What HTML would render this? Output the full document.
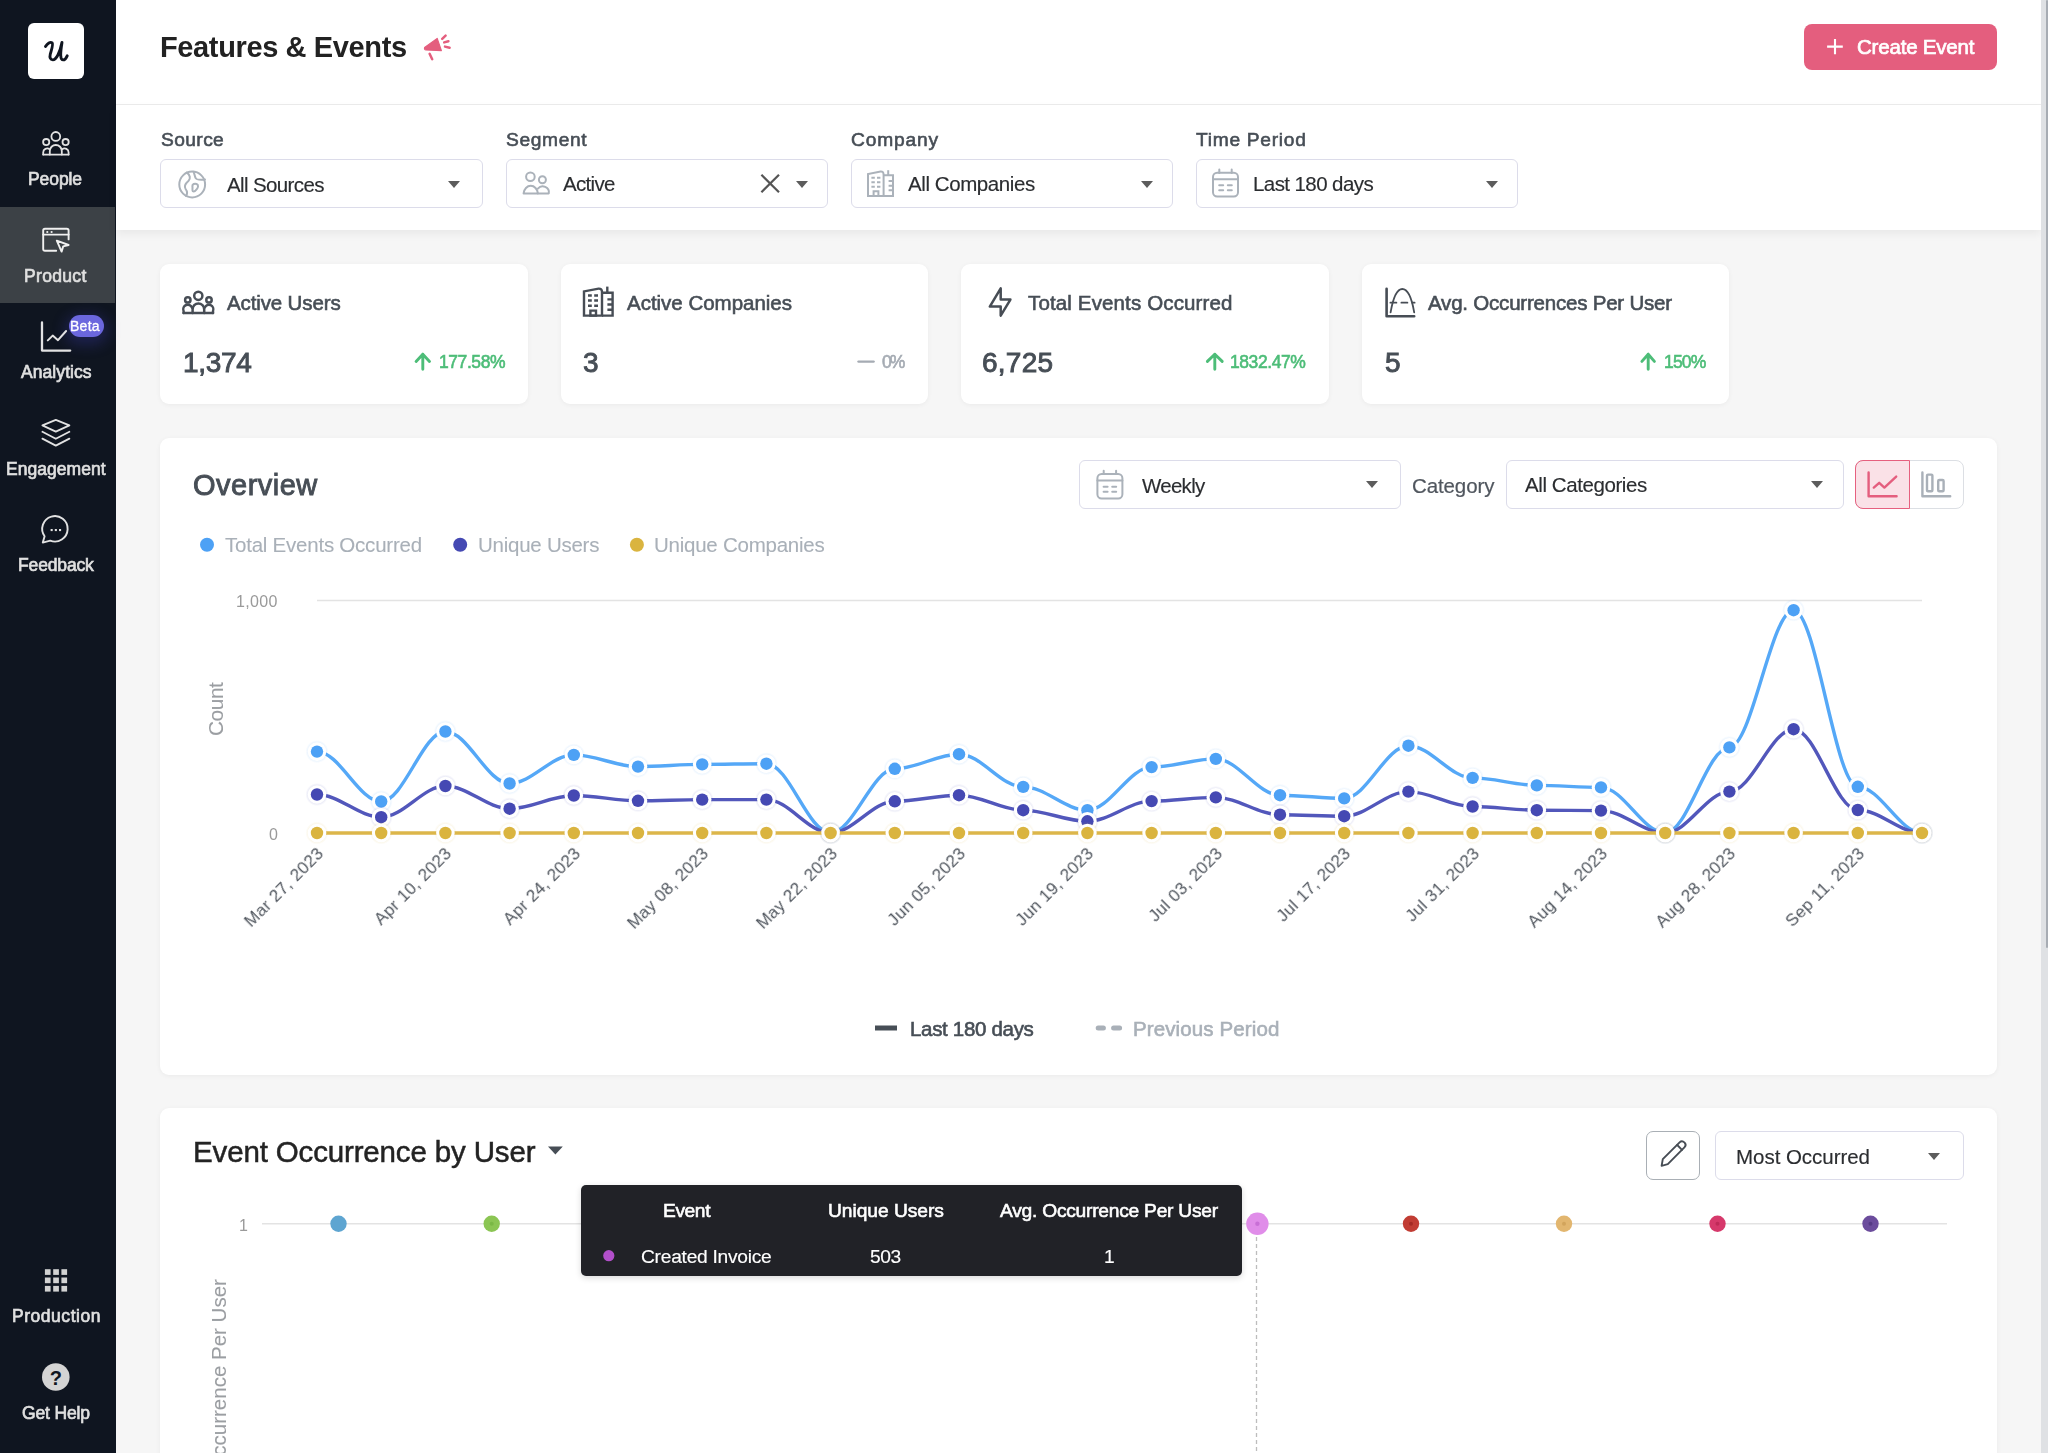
<!DOCTYPE html><html><head><meta charset="utf-8"><style>
*{box-sizing:border-box;margin:0;padding:0}
html,body{width:2048px;height:1453px;overflow:hidden;background:#f6f6f6;font-family:'Liberation Sans', sans-serif}
.abs{position:absolute}
.t{position:absolute;will-change:transform;white-space:nowrap;line-height:normal;font-family:'Liberation Sans', sans-serif}
.xl{width:200px;text-align:right;font-size:17px;color:#50565e;transform-origin:100% 50%;transform:rotate(-45deg);letter-spacing:0.3px}
.sel{position:absolute;background:#fff;border:1.5px solid #dcdcea;border-radius:6px}
.card{position:absolute;background:#fff;border-radius:9px;box-shadow:0 1px 5px rgba(0,0,0,0.05)}
.tri{position:absolute;width:0;height:0;border-left:6.5px solid transparent;border-right:6.5px solid transparent;border-top:7px solid #5c5c5c}
</style></head><body>
<!-- sidebar -->
<div class="abs" style="left:0;top:0;width:116px;height:1453px;background:#0f1520"></div>
<div class="abs" style="left:0;top:207px;width:115px;height:96px;background:#3c4146"></div>
<div class="abs" style="left:28px;top:23px;width:56px;height:56px;background:#fff;border-radius:6px"></div>
<!-- header -->
<div class="abs" style="left:116px;top:0;width:1925px;height:104px;background:#fff"></div>
<div class="abs" style="left:116px;top:104px;width:1925px;height:1.5px;background:#ececec"></div>
<div class="abs" style="left:116px;top:105px;width:1925px;height:125px;background:#fff;box-shadow:0 4px 9px rgba(0,0,0,0.06)"></div>
<div class="abs" style="left:1804px;top:23.5px;width:193px;height:46.5px;background:#e45e7e;border-radius:8px"></div>
<!-- scrollbar -->
<div class="abs" style="left:2041px;top:0;width:7px;height:1453px;background:#dfe1e4"></div>
<div class="abs" style="left:2045.5px;top:0;width:2.5px;height:948px;background:#a7acb3;border-radius:2px"></div>
<!-- filter boxes -->
<div class="sel" style="left:160px;top:159px;width:322.5px;height:49px"></div>
<div class="sel" style="left:505.5px;top:159px;width:322px;height:49px"></div>
<div class="sel" style="left:850.5px;top:159px;width:322px;height:49px"></div>
<div class="sel" style="left:1195.5px;top:159px;width:322px;height:49px"></div>
<div class="tri" style="left:447.5px;top:180.5px"></div>
<div class="tri" style="left:795.5px;top:180.5px"></div>
<div class="tri" style="left:1140.5px;top:180.5px"></div>
<div class="tri" style="left:1485.5px;top:180.5px"></div>
<!-- stat cards -->
<div class="card" style="left:160px;top:264px;width:367.5px;height:140px"></div>
<div class="card" style="left:560.5px;top:264px;width:367.5px;height:140px"></div>
<div class="card" style="left:961px;top:264px;width:367.5px;height:140px"></div>
<div class="card" style="left:1361.5px;top:264px;width:367.5px;height:140px"></div>
<!-- overview -->
<div class="card" style="left:160px;top:437.5px;width:1837px;height:637.5px"></div>
<div class="sel" style="left:1079px;top:460px;width:321.5px;height:48.5px"></div>
<div class="tri" style="left:1366px;top:481px"></div>
<div class="sel" style="left:1506px;top:460px;width:337.5px;height:48.5px"></div>
<div class="tri" style="left:1810.5px;top:481px"></div>
<div class="abs" style="left:1855px;top:459.5px;width:109px;height:49.5px;border:1.5px solid #dcdfe4;border-radius:8px;background:#fff"></div>
<div class="abs" style="left:1855px;top:459.5px;width:55px;height:49.5px;border:1.5px solid #e6607f;border-radius:8px 0 0 8px;background:#fae1e7"></div>
<!-- event card -->
<div class="card" style="left:160px;top:1108px;width:1837px;height:400px"></div>
<div class="abs" style="left:1645.5px;top:1130.5px;width:54.5px;height:49px;border:1.5px solid #a9afb5;border-radius:7px"></div>
<div class="sel" style="left:1714.5px;top:1130.5px;width:249px;height:49px"></div>
<div class="tri" style="left:1928px;top:1152.5px"></div>

<div class="abs" style="left:68.8px;top:314.6px;width:34.8px;height:22.8px;border-radius:12px;background:#6b67de;box-shadow:0 4px 14px 4px rgba(70,70,200,0.28)"></div>

<svg class="abs" style="left:0;top:0" width="2048" height="1453" viewBox="0 0 2048 1453">
<defs><radialGradient id="g4da1f5"><stop offset="0.75" stop-color="#4da1f5" stop-opacity="0.14"/><stop offset="1" stop-color="#4da1f5" stop-opacity="0"/></radialGradient><radialGradient id="g4549b3"><stop offset="0.75" stop-color="#4549b3" stop-opacity="0.14"/><stop offset="1" stop-color="#4549b3" stop-opacity="0"/></radialGradient><radialGradient id="gdab43f"><stop offset="0.75" stop-color="#dab43f" stop-opacity="0.14"/><stop offset="1" stop-color="#dab43f" stop-opacity="0"/></radialGradient></defs>
<line x1="317" y1="600.5" x2="1922" y2="600.5" stroke="#e3e3e3" stroke-width="1.5"/>
<path d="M317.0,751.6 C339.5,751.6 358.7,801.5 381.2,801.5 C403.7,801.5 422.9,731.5 445.4,731.5 C467.9,731.5 487.1,783.5 509.6,783.5 C532.1,783.5 551.3,754.9 573.8,754.9 C596.3,754.9 615.5,766.6 638.0,766.6 C660.5,766.6 679.7,764.4 702.2,764.4 C724.7,764.4 743.9,763.7 766.4,763.7 C788.9,763.7 808.1,833.0 830.6,833.0 C853.1,833.0 872.3,768.8 894.8,768.8 C917.3,768.8 936.5,754.2 959.0,754.2 C981.5,754.2 1000.7,786.9 1023.2,786.9 C1045.7,786.9 1064.9,810.2 1087.4,810.2 C1109.9,810.2 1129.1,767.1 1151.6,767.1 C1174.1,767.1 1193.3,758.9 1215.8,758.9 C1238.3,758.9 1257.5,795.2 1280.0,795.2 C1302.5,795.2 1321.7,798.4 1344.2,798.4 C1366.7,798.4 1385.9,745.7 1408.4,745.7 C1430.9,745.7 1450.1,777.9 1472.6,777.9 C1495.1,777.9 1514.3,785.4 1536.8,785.4 C1559.3,785.4 1578.5,787.4 1601.0,787.4 C1623.5,787.4 1642.7,833.0 1665.2,833.0 C1687.7,833.0 1706.9,747.4 1729.4,747.4 C1751.9,747.4 1771.1,610.2 1793.6,610.2 C1816.1,610.2 1835.3,786.8 1857.8,786.8 C1880.3,786.8 1899.5,833.0 1922.0,833.0" fill="none" stroke="#55a8f7" stroke-width="3.4" stroke-linejoin="round"/><circle cx="317.0" cy="751.6" r="11.5" fill="url(#g4da1f5)"/><circle cx="317.0" cy="751.6" r="9.3" fill="#fff"/><circle cx="317.0" cy="751.6" r="6.2" fill="#4da1f5"/><circle cx="381.2" cy="801.5" r="11.5" fill="url(#g4da1f5)"/><circle cx="381.2" cy="801.5" r="9.3" fill="#fff"/><circle cx="381.2" cy="801.5" r="6.2" fill="#4da1f5"/><circle cx="445.4" cy="731.5" r="11.5" fill="url(#g4da1f5)"/><circle cx="445.4" cy="731.5" r="9.3" fill="#fff"/><circle cx="445.4" cy="731.5" r="6.2" fill="#4da1f5"/><circle cx="509.6" cy="783.5" r="11.5" fill="url(#g4da1f5)"/><circle cx="509.6" cy="783.5" r="9.3" fill="#fff"/><circle cx="509.6" cy="783.5" r="6.2" fill="#4da1f5"/><circle cx="573.8" cy="754.9" r="11.5" fill="url(#g4da1f5)"/><circle cx="573.8" cy="754.9" r="9.3" fill="#fff"/><circle cx="573.8" cy="754.9" r="6.2" fill="#4da1f5"/><circle cx="638.0" cy="766.6" r="11.5" fill="url(#g4da1f5)"/><circle cx="638.0" cy="766.6" r="9.3" fill="#fff"/><circle cx="638.0" cy="766.6" r="6.2" fill="#4da1f5"/><circle cx="702.2" cy="764.4" r="11.5" fill="url(#g4da1f5)"/><circle cx="702.2" cy="764.4" r="9.3" fill="#fff"/><circle cx="702.2" cy="764.4" r="6.2" fill="#4da1f5"/><circle cx="766.4" cy="763.7" r="11.5" fill="url(#g4da1f5)"/><circle cx="766.4" cy="763.7" r="9.3" fill="#fff"/><circle cx="766.4" cy="763.7" r="6.2" fill="#4da1f5"/><circle cx="830.6" cy="833.0" r="11.5" fill="url(#g4da1f5)"/><circle cx="830.6" cy="833.0" r="9.3" fill="#fff"/><circle cx="830.6" cy="833.0" r="6.2" fill="#4da1f5"/><circle cx="894.8" cy="768.8" r="11.5" fill="url(#g4da1f5)"/><circle cx="894.8" cy="768.8" r="9.3" fill="#fff"/><circle cx="894.8" cy="768.8" r="6.2" fill="#4da1f5"/><circle cx="959.0" cy="754.2" r="11.5" fill="url(#g4da1f5)"/><circle cx="959.0" cy="754.2" r="9.3" fill="#fff"/><circle cx="959.0" cy="754.2" r="6.2" fill="#4da1f5"/><circle cx="1023.2" cy="786.9" r="11.5" fill="url(#g4da1f5)"/><circle cx="1023.2" cy="786.9" r="9.3" fill="#fff"/><circle cx="1023.2" cy="786.9" r="6.2" fill="#4da1f5"/><circle cx="1087.4" cy="810.2" r="11.5" fill="url(#g4da1f5)"/><circle cx="1087.4" cy="810.2" r="9.3" fill="#fff"/><circle cx="1087.4" cy="810.2" r="6.2" fill="#4da1f5"/><circle cx="1151.6" cy="767.1" r="11.5" fill="url(#g4da1f5)"/><circle cx="1151.6" cy="767.1" r="9.3" fill="#fff"/><circle cx="1151.6" cy="767.1" r="6.2" fill="#4da1f5"/><circle cx="1215.8" cy="758.9" r="11.5" fill="url(#g4da1f5)"/><circle cx="1215.8" cy="758.9" r="9.3" fill="#fff"/><circle cx="1215.8" cy="758.9" r="6.2" fill="#4da1f5"/><circle cx="1280.0" cy="795.2" r="11.5" fill="url(#g4da1f5)"/><circle cx="1280.0" cy="795.2" r="9.3" fill="#fff"/><circle cx="1280.0" cy="795.2" r="6.2" fill="#4da1f5"/><circle cx="1344.2" cy="798.4" r="11.5" fill="url(#g4da1f5)"/><circle cx="1344.2" cy="798.4" r="9.3" fill="#fff"/><circle cx="1344.2" cy="798.4" r="6.2" fill="#4da1f5"/><circle cx="1408.4" cy="745.7" r="11.5" fill="url(#g4da1f5)"/><circle cx="1408.4" cy="745.7" r="9.3" fill="#fff"/><circle cx="1408.4" cy="745.7" r="6.2" fill="#4da1f5"/><circle cx="1472.6" cy="777.9" r="11.5" fill="url(#g4da1f5)"/><circle cx="1472.6" cy="777.9" r="9.3" fill="#fff"/><circle cx="1472.6" cy="777.9" r="6.2" fill="#4da1f5"/><circle cx="1536.8" cy="785.4" r="11.5" fill="url(#g4da1f5)"/><circle cx="1536.8" cy="785.4" r="9.3" fill="#fff"/><circle cx="1536.8" cy="785.4" r="6.2" fill="#4da1f5"/><circle cx="1601.0" cy="787.4" r="11.5" fill="url(#g4da1f5)"/><circle cx="1601.0" cy="787.4" r="9.3" fill="#fff"/><circle cx="1601.0" cy="787.4" r="6.2" fill="#4da1f5"/><circle cx="1665.2" cy="833.0" r="11.5" fill="url(#g4da1f5)"/><circle cx="1665.2" cy="833.0" r="9.3" fill="#fff"/><circle cx="1665.2" cy="833.0" r="6.2" fill="#4da1f5"/><circle cx="1729.4" cy="747.4" r="11.5" fill="url(#g4da1f5)"/><circle cx="1729.4" cy="747.4" r="9.3" fill="#fff"/><circle cx="1729.4" cy="747.4" r="6.2" fill="#4da1f5"/><circle cx="1793.6" cy="610.2" r="11.5" fill="url(#g4da1f5)"/><circle cx="1793.6" cy="610.2" r="9.3" fill="#fff"/><circle cx="1793.6" cy="610.2" r="6.2" fill="#4da1f5"/><circle cx="1857.8" cy="786.8" r="11.5" fill="url(#g4da1f5)"/><circle cx="1857.8" cy="786.8" r="9.3" fill="#fff"/><circle cx="1857.8" cy="786.8" r="6.2" fill="#4da1f5"/><circle cx="1922.0" cy="833.0" r="11.5" fill="url(#g4da1f5)"/><circle cx="1922.0" cy="833.0" r="9.3" fill="#fff"/><circle cx="1922.0" cy="833.0" r="6.2" fill="#4da1f5"/><path d="M317.0,794.5 C339.5,794.5 358.7,817.2 381.2,817.2 C403.7,817.2 422.9,786.0 445.4,786.0 C467.9,786.0 487.1,808.7 509.6,808.7 C532.1,808.7 551.3,795.5 573.8,795.5 C596.3,795.5 615.5,800.8 638.0,800.8 C660.5,800.8 679.7,799.6 702.2,799.6 C724.7,799.6 743.9,799.6 766.4,799.6 C788.9,799.6 808.1,833.0 830.6,833.0 C853.1,833.0 872.3,801.3 894.8,801.3 C917.3,801.3 936.5,795.2 959.0,795.2 C981.5,795.2 1000.7,810.2 1023.2,810.2 C1045.7,810.2 1064.9,821.3 1087.4,821.3 C1109.9,821.3 1129.1,801.1 1151.6,801.1 C1174.1,801.1 1193.3,797.4 1215.8,797.4 C1238.3,797.4 1257.5,814.7 1280.0,814.7 C1302.5,814.7 1321.7,816.2 1344.2,816.2 C1366.7,816.2 1385.9,791.6 1408.4,791.6 C1430.9,791.6 1450.1,806.5 1472.6,806.5 C1495.1,806.5 1514.3,810.2 1536.8,810.2 C1559.3,810.2 1578.5,810.6 1601.0,810.6 C1623.5,810.6 1642.7,833.0 1665.2,833.0 C1687.7,833.0 1706.9,791.6 1729.4,791.6 C1751.9,791.6 1771.1,729.2 1793.6,729.2 C1816.1,729.2 1835.3,810.0 1857.8,810.0 C1880.3,810.0 1899.5,833.0 1922.0,833.0" fill="none" stroke="#5257bb" stroke-width="3.4" stroke-linejoin="round"/><circle cx="317.0" cy="794.5" r="11.5" fill="url(#g4549b3)"/><circle cx="317.0" cy="794.5" r="9.3" fill="#fff"/><circle cx="317.0" cy="794.5" r="6.2" fill="#4549b3"/><circle cx="381.2" cy="817.2" r="11.5" fill="url(#g4549b3)"/><circle cx="381.2" cy="817.2" r="9.3" fill="#fff"/><circle cx="381.2" cy="817.2" r="6.2" fill="#4549b3"/><circle cx="445.4" cy="786.0" r="11.5" fill="url(#g4549b3)"/><circle cx="445.4" cy="786.0" r="9.3" fill="#fff"/><circle cx="445.4" cy="786.0" r="6.2" fill="#4549b3"/><circle cx="509.6" cy="808.7" r="11.5" fill="url(#g4549b3)"/><circle cx="509.6" cy="808.7" r="9.3" fill="#fff"/><circle cx="509.6" cy="808.7" r="6.2" fill="#4549b3"/><circle cx="573.8" cy="795.5" r="11.5" fill="url(#g4549b3)"/><circle cx="573.8" cy="795.5" r="9.3" fill="#fff"/><circle cx="573.8" cy="795.5" r="6.2" fill="#4549b3"/><circle cx="638.0" cy="800.8" r="11.5" fill="url(#g4549b3)"/><circle cx="638.0" cy="800.8" r="9.3" fill="#fff"/><circle cx="638.0" cy="800.8" r="6.2" fill="#4549b3"/><circle cx="702.2" cy="799.6" r="11.5" fill="url(#g4549b3)"/><circle cx="702.2" cy="799.6" r="9.3" fill="#fff"/><circle cx="702.2" cy="799.6" r="6.2" fill="#4549b3"/><circle cx="766.4" cy="799.6" r="11.5" fill="url(#g4549b3)"/><circle cx="766.4" cy="799.6" r="9.3" fill="#fff"/><circle cx="766.4" cy="799.6" r="6.2" fill="#4549b3"/><circle cx="830.6" cy="833.0" r="11.5" fill="url(#g4549b3)"/><circle cx="830.6" cy="833.0" r="9.3" fill="#fff"/><circle cx="830.6" cy="833.0" r="6.2" fill="#4549b3"/><circle cx="894.8" cy="801.3" r="11.5" fill="url(#g4549b3)"/><circle cx="894.8" cy="801.3" r="9.3" fill="#fff"/><circle cx="894.8" cy="801.3" r="6.2" fill="#4549b3"/><circle cx="959.0" cy="795.2" r="11.5" fill="url(#g4549b3)"/><circle cx="959.0" cy="795.2" r="9.3" fill="#fff"/><circle cx="959.0" cy="795.2" r="6.2" fill="#4549b3"/><circle cx="1023.2" cy="810.2" r="11.5" fill="url(#g4549b3)"/><circle cx="1023.2" cy="810.2" r="9.3" fill="#fff"/><circle cx="1023.2" cy="810.2" r="6.2" fill="#4549b3"/><circle cx="1087.4" cy="821.3" r="11.5" fill="url(#g4549b3)"/><circle cx="1087.4" cy="821.3" r="9.3" fill="#fff"/><circle cx="1087.4" cy="821.3" r="6.2" fill="#4549b3"/><circle cx="1151.6" cy="801.1" r="11.5" fill="url(#g4549b3)"/><circle cx="1151.6" cy="801.1" r="9.3" fill="#fff"/><circle cx="1151.6" cy="801.1" r="6.2" fill="#4549b3"/><circle cx="1215.8" cy="797.4" r="11.5" fill="url(#g4549b3)"/><circle cx="1215.8" cy="797.4" r="9.3" fill="#fff"/><circle cx="1215.8" cy="797.4" r="6.2" fill="#4549b3"/><circle cx="1280.0" cy="814.7" r="11.5" fill="url(#g4549b3)"/><circle cx="1280.0" cy="814.7" r="9.3" fill="#fff"/><circle cx="1280.0" cy="814.7" r="6.2" fill="#4549b3"/><circle cx="1344.2" cy="816.2" r="11.5" fill="url(#g4549b3)"/><circle cx="1344.2" cy="816.2" r="9.3" fill="#fff"/><circle cx="1344.2" cy="816.2" r="6.2" fill="#4549b3"/><circle cx="1408.4" cy="791.6" r="11.5" fill="url(#g4549b3)"/><circle cx="1408.4" cy="791.6" r="9.3" fill="#fff"/><circle cx="1408.4" cy="791.6" r="6.2" fill="#4549b3"/><circle cx="1472.6" cy="806.5" r="11.5" fill="url(#g4549b3)"/><circle cx="1472.6" cy="806.5" r="9.3" fill="#fff"/><circle cx="1472.6" cy="806.5" r="6.2" fill="#4549b3"/><circle cx="1536.8" cy="810.2" r="11.5" fill="url(#g4549b3)"/><circle cx="1536.8" cy="810.2" r="9.3" fill="#fff"/><circle cx="1536.8" cy="810.2" r="6.2" fill="#4549b3"/><circle cx="1601.0" cy="810.6" r="11.5" fill="url(#g4549b3)"/><circle cx="1601.0" cy="810.6" r="9.3" fill="#fff"/><circle cx="1601.0" cy="810.6" r="6.2" fill="#4549b3"/><circle cx="1665.2" cy="833.0" r="11.5" fill="url(#g4549b3)"/><circle cx="1665.2" cy="833.0" r="9.3" fill="#fff"/><circle cx="1665.2" cy="833.0" r="6.2" fill="#4549b3"/><circle cx="1729.4" cy="791.6" r="11.5" fill="url(#g4549b3)"/><circle cx="1729.4" cy="791.6" r="9.3" fill="#fff"/><circle cx="1729.4" cy="791.6" r="6.2" fill="#4549b3"/><circle cx="1793.6" cy="729.2" r="11.5" fill="url(#g4549b3)"/><circle cx="1793.6" cy="729.2" r="9.3" fill="#fff"/><circle cx="1793.6" cy="729.2" r="6.2" fill="#4549b3"/><circle cx="1857.8" cy="810.0" r="11.5" fill="url(#g4549b3)"/><circle cx="1857.8" cy="810.0" r="9.3" fill="#fff"/><circle cx="1857.8" cy="810.0" r="6.2" fill="#4549b3"/><circle cx="1922.0" cy="833.0" r="11.5" fill="url(#g4549b3)"/><circle cx="1922.0" cy="833.0" r="9.3" fill="#fff"/><circle cx="1922.0" cy="833.0" r="6.2" fill="#4549b3"/><path d="M317.0,833.0 C339.5,833.0 358.7,833.0 381.2,833.0 C403.7,833.0 422.9,833.0 445.4,833.0 C467.9,833.0 487.1,833.0 509.6,833.0 C532.1,833.0 551.3,833.0 573.8,833.0 C596.3,833.0 615.5,833.0 638.0,833.0 C660.5,833.0 679.7,833.0 702.2,833.0 C724.7,833.0 743.9,833.0 766.4,833.0 C788.9,833.0 808.1,833.0 830.6,833.0 C853.1,833.0 872.3,833.0 894.8,833.0 C917.3,833.0 936.5,833.0 959.0,833.0 C981.5,833.0 1000.7,833.0 1023.2,833.0 C1045.7,833.0 1064.9,833.0 1087.4,833.0 C1109.9,833.0 1129.1,833.0 1151.6,833.0 C1174.1,833.0 1193.3,833.0 1215.8,833.0 C1238.3,833.0 1257.5,833.0 1280.0,833.0 C1302.5,833.0 1321.7,833.0 1344.2,833.0 C1366.7,833.0 1385.9,833.0 1408.4,833.0 C1430.9,833.0 1450.1,833.0 1472.6,833.0 C1495.1,833.0 1514.3,833.0 1536.8,833.0 C1559.3,833.0 1578.5,833.0 1601.0,833.0 C1623.5,833.0 1642.7,833.0 1665.2,833.0 C1687.7,833.0 1706.9,833.0 1729.4,833.0 C1751.9,833.0 1771.1,833.0 1793.6,833.0 C1816.1,833.0 1835.3,833.0 1857.8,833.0 C1880.3,833.0 1899.5,833.0 1922.0,833.0" fill="none" stroke="#dcb64a" stroke-width="3.6" stroke-linejoin="round"/><circle cx="317.0" cy="833.0" r="11.5" fill="url(#gdab43f)"/><circle cx="317.0" cy="833.0" r="9.3" fill="#fff"/><circle cx="317.0" cy="833.0" r="6.2" fill="#dab43f"/><circle cx="381.2" cy="833.0" r="11.5" fill="url(#gdab43f)"/><circle cx="381.2" cy="833.0" r="9.3" fill="#fff"/><circle cx="381.2" cy="833.0" r="6.2" fill="#dab43f"/><circle cx="445.4" cy="833.0" r="11.5" fill="url(#gdab43f)"/><circle cx="445.4" cy="833.0" r="9.3" fill="#fff"/><circle cx="445.4" cy="833.0" r="6.2" fill="#dab43f"/><circle cx="509.6" cy="833.0" r="11.5" fill="url(#gdab43f)"/><circle cx="509.6" cy="833.0" r="9.3" fill="#fff"/><circle cx="509.6" cy="833.0" r="6.2" fill="#dab43f"/><circle cx="573.8" cy="833.0" r="11.5" fill="url(#gdab43f)"/><circle cx="573.8" cy="833.0" r="9.3" fill="#fff"/><circle cx="573.8" cy="833.0" r="6.2" fill="#dab43f"/><circle cx="638.0" cy="833.0" r="11.5" fill="url(#gdab43f)"/><circle cx="638.0" cy="833.0" r="9.3" fill="#fff"/><circle cx="638.0" cy="833.0" r="6.2" fill="#dab43f"/><circle cx="702.2" cy="833.0" r="11.5" fill="url(#gdab43f)"/><circle cx="702.2" cy="833.0" r="9.3" fill="#fff"/><circle cx="702.2" cy="833.0" r="6.2" fill="#dab43f"/><circle cx="766.4" cy="833.0" r="11.5" fill="url(#gdab43f)"/><circle cx="766.4" cy="833.0" r="9.3" fill="#fff"/><circle cx="766.4" cy="833.0" r="6.2" fill="#dab43f"/><circle cx="830.6" cy="833.0" r="11.5" fill="url(#gdab43f)"/><circle cx="830.6" cy="833.0" r="9.3" fill="#fff"/><circle cx="830.6" cy="833.0" r="6.2" fill="#dab43f"/><circle cx="894.8" cy="833.0" r="11.5" fill="url(#gdab43f)"/><circle cx="894.8" cy="833.0" r="9.3" fill="#fff"/><circle cx="894.8" cy="833.0" r="6.2" fill="#dab43f"/><circle cx="959.0" cy="833.0" r="11.5" fill="url(#gdab43f)"/><circle cx="959.0" cy="833.0" r="9.3" fill="#fff"/><circle cx="959.0" cy="833.0" r="6.2" fill="#dab43f"/><circle cx="1023.2" cy="833.0" r="11.5" fill="url(#gdab43f)"/><circle cx="1023.2" cy="833.0" r="9.3" fill="#fff"/><circle cx="1023.2" cy="833.0" r="6.2" fill="#dab43f"/><circle cx="1087.4" cy="833.0" r="11.5" fill="url(#gdab43f)"/><circle cx="1087.4" cy="833.0" r="9.3" fill="#fff"/><circle cx="1087.4" cy="833.0" r="6.2" fill="#dab43f"/><circle cx="1151.6" cy="833.0" r="11.5" fill="url(#gdab43f)"/><circle cx="1151.6" cy="833.0" r="9.3" fill="#fff"/><circle cx="1151.6" cy="833.0" r="6.2" fill="#dab43f"/><circle cx="1215.8" cy="833.0" r="11.5" fill="url(#gdab43f)"/><circle cx="1215.8" cy="833.0" r="9.3" fill="#fff"/><circle cx="1215.8" cy="833.0" r="6.2" fill="#dab43f"/><circle cx="1280.0" cy="833.0" r="11.5" fill="url(#gdab43f)"/><circle cx="1280.0" cy="833.0" r="9.3" fill="#fff"/><circle cx="1280.0" cy="833.0" r="6.2" fill="#dab43f"/><circle cx="1344.2" cy="833.0" r="11.5" fill="url(#gdab43f)"/><circle cx="1344.2" cy="833.0" r="9.3" fill="#fff"/><circle cx="1344.2" cy="833.0" r="6.2" fill="#dab43f"/><circle cx="1408.4" cy="833.0" r="11.5" fill="url(#gdab43f)"/><circle cx="1408.4" cy="833.0" r="9.3" fill="#fff"/><circle cx="1408.4" cy="833.0" r="6.2" fill="#dab43f"/><circle cx="1472.6" cy="833.0" r="11.5" fill="url(#gdab43f)"/><circle cx="1472.6" cy="833.0" r="9.3" fill="#fff"/><circle cx="1472.6" cy="833.0" r="6.2" fill="#dab43f"/><circle cx="1536.8" cy="833.0" r="11.5" fill="url(#gdab43f)"/><circle cx="1536.8" cy="833.0" r="9.3" fill="#fff"/><circle cx="1536.8" cy="833.0" r="6.2" fill="#dab43f"/><circle cx="1601.0" cy="833.0" r="11.5" fill="url(#gdab43f)"/><circle cx="1601.0" cy="833.0" r="9.3" fill="#fff"/><circle cx="1601.0" cy="833.0" r="6.2" fill="#dab43f"/><circle cx="1665.2" cy="833.0" r="11.5" fill="url(#gdab43f)"/><circle cx="1665.2" cy="833.0" r="9.3" fill="#fff"/><circle cx="1665.2" cy="833.0" r="6.2" fill="#dab43f"/><circle cx="1729.4" cy="833.0" r="11.5" fill="url(#gdab43f)"/><circle cx="1729.4" cy="833.0" r="9.3" fill="#fff"/><circle cx="1729.4" cy="833.0" r="6.2" fill="#dab43f"/><circle cx="1793.6" cy="833.0" r="11.5" fill="url(#gdab43f)"/><circle cx="1793.6" cy="833.0" r="9.3" fill="#fff"/><circle cx="1793.6" cy="833.0" r="6.2" fill="#dab43f"/><circle cx="1857.8" cy="833.0" r="11.5" fill="url(#gdab43f)"/><circle cx="1857.8" cy="833.0" r="9.3" fill="#fff"/><circle cx="1857.8" cy="833.0" r="6.2" fill="#dab43f"/><circle cx="1922.0" cy="833.0" r="11.5" fill="url(#gdab43f)"/><circle cx="1922.0" cy="833.0" r="9.3" fill="#fff"/><circle cx="1922.0" cy="833.0" r="6.2" fill="#dab43f"/>
</svg>

<svg class="abs" style="left:0;top:0" width="2048" height="1453" viewBox="0 0 2048 1453" fill="none" stroke-linecap="round" stroke-linejoin="round">
<!-- logo u -->
<path d="M45.5,46.6 C47.4,43.4 50.4,41.4 52.1,42.9 C53.6,44.4 51.2,50.6 50.3,54 C49.4,57.6 50.4,59.9 52.8,59.9 C56.2,59.9 60,52.6 62,42.4 C61.2,47.2 60.6,52 60.7,55.2 C60.8,58.4 61.6,59.9 63.2,59.9 C64.8,59.9 66.2,58 67.2,55.8" stroke="#0f1520" stroke-width="2.9" fill="none" stroke-linecap="round" stroke-linejoin="round"/>
<!-- sidebar people -->
<g stroke="#e2e2e2" stroke-width="1.8">
 <circle cx="55.8" cy="136.4" r="4.4"/>
 <circle cx="46.2" cy="142.1" r="3.1"/>
 <circle cx="65.6" cy="142.1" r="3.1"/>
 <path d="M49.8,154.6 V151 A6,6 0 0 1 61.8,151 V154.6"/>
 <path d="M43.2,154.6 V152.5 A4,4 0 0 1 49.6,149.3"/>
 <path d="M68.6,154.6 V152.5 A4,4 0 0 0 62.2,149.3"/>
 <path d="M43.2,154.6 H68.6"/>
</g>
<!-- sidebar product -->
<g stroke="#f0f0f0" stroke-width="1.9">
 <path d="M56.2,250.8 H45 Q43.2,250.8 43.2,249 V230.6 Q43.2,228.8 45,228.8 H66.8 Q68.6,228.8 68.6,230.6 V239.4"/>
 <path d="M43.2,234.6 H68.6"/>
 <path d="M56.8,240.6 L68.6,245 L63.2,246.4 L61.6,251.6 Z"/>
</g>
<g fill="#f0f0f0" stroke="none"><circle cx="47.3" cy="232" r="1.1"/><circle cx="51.6" cy="232" r="1.1"/></g>
<!-- analytics -->
<g stroke="#e2e2e2" stroke-width="2.3" stroke-linecap="round">
 <path d="M42,322.5 V350.6 H70.2"/>
 <path d="M47.8,340.4 L52.7,335.6 L58,340.2 L66.1,331" stroke-width="2"/>
</g>
<!-- engagement -->
<g stroke="#e2e2e2" stroke-width="1.8">
 <path d="M42.4,425.4 L55.8,419.9 L69.4,425.4 L55.8,431.6 Z"/>
 <path d="M42.4,431.8 L55.8,438.8 L69.4,431.8"/>
 <path d="M42.4,438.6 L55.8,445.6 L69.4,438.6"/>
</g>
<!-- feedback -->
<g stroke="#e2e2e2" stroke-width="1.9">
 <path d="M44.6,536.2 A12.7,12.7 0 1 1 50.2,540.6 L42.8,542.6 Z"/>
</g>
<g fill="#e2e2e2" stroke="none"><rect x="50.6" y="529" width="2.1" height="2.1"/><rect x="54.8" y="529" width="2.1" height="2.1"/><rect x="59" y="529" width="2.1" height="2.1"/></g>
<!-- production grid -->
<g fill="#d2d2d2" stroke="none">
 <rect x="44.9" y="1269.2" width="5.7" height="5.7"/><rect x="53.2" y="1269.2" width="5.7" height="5.7"/><rect x="61.4" y="1269.2" width="5.7" height="5.7"/>
 <rect x="44.9" y="1277.5" width="5.7" height="5.7"/><rect x="53.2" y="1277.5" width="5.7" height="5.7"/><rect x="61.4" y="1277.5" width="5.7" height="5.7"/>
 <rect x="44.9" y="1285.9" width="5.7" height="5.7"/><rect x="53.2" y="1285.9" width="5.7" height="5.7"/><rect x="61.4" y="1285.9" width="5.7" height="5.7"/>
</g>
<circle cx="55.8" cy="1377" r="13.8" fill="#d4d4d4" stroke="none"/>
<text x="55.9" y="1384.6" text-anchor="middle" font-family="'Liberation Sans'" font-weight="bold" font-size="20" fill="#0f1520" stroke="none">?</text>

<!-- megaphone -->
<g fill="#e45e7e" stroke="#e45e7e" stroke-width="1.2">
 <path d="M424.6,47.6 Q424,49.6 426,50 L441.4,50.6 L437.2,38.4 Z"/>
</g>
<g stroke="#e45e7e" stroke-width="2.5">
 <path d="M429.6,53.8 L432.2,59.2"/>
 <path d="M442.2,38.8 L445.6,35.6"/>
 <path d="M444.2,42.4 L448.4,41.2"/>
 <path d="M445,46.6 L449.6,47.8"/>
</g>
<!-- create event plus -->
<g stroke="#fff" stroke-width="2.1" stroke-linecap="butt"><path d="M1835,39 V54.2 M1827.1,46.6 H1842.8"/></g>

<!-- filter icons -->
<g stroke="#abb2ba" stroke-width="2">
 <circle cx="192.2" cy="184.5" r="12.9"/>
 <path d="M186.6,172.6 C190.5,174.5 190.5,179 188.6,180.8 C185.5,183.5 183.6,186 185.6,189 C187.6,191.6 187.6,193.5 186,196"/>
 <path d="M193.6,171.8 C194.4,173.6 194.8,176.2 195.6,178 C196.4,180 199,180.2 205,179.6"/>
 <path d="M192.4,186 C192.2,184 194.6,183.4 196.6,184 C198.8,184.8 198.2,187.6 196.8,189.2 C195.6,190.8 194,192 192.8,191.2 C192,190.6 192.8,189 192.4,186 Z"/>
</g>
<g stroke="#abb2ba" stroke-width="2">
 <circle cx="530.4" cy="176.7" r="4.3"/>
 <circle cx="542.4" cy="179.7" r="3.5"/>
 <path d="M523.6,193.4 A7.2,8.6 0 0 1 537.9,193.4 Z"/>
 <path d="M537.9,188.6 A6.2,6 0 0 1 548.8,193.4 H537.9"/>
</g>
<g stroke="#abb2ba" stroke-width="2" stroke-linecap="butt" stroke-linejoin="miter">
 <path d="M868,196 V174 L880.6,171.4 Q883.6,171.2 883.6,175 V196 Z"/>
 <path d="M883.6,175.3 H893 V196 H883.6"/>
 <path d="M888.2,170.2 V175.3"/>
 <path d="M873.6,191.2 H878.4 V196 H873.6 Z"/>
 <path d="M871.4,177.8 H874.8 M877,177.8 H880.4 M871.4,182.2 H874.8 M877,182.2 H880.4 M871.4,186.7 H874.8 M877,186.7 H880.4"/>
 <path d="M888.6,181.1 H893 M888.6,185.8 H893 M888.6,190.2 H893"/>
</g>
<g stroke="#abb2ba" stroke-width="2">
 <rect x="1213" y="172.8" width="25" height="23.6" rx="4.2"/>
 <path d="M1213,179.2 H1238 M1219.3,169.6 V173 M1231.7,169.6 V173"/>
 <path d="M1219.2,185.3 H1223.2 M1227.8,185.3 H1231.8 M1219.2,190.3 H1223.2 M1227.8,190.3 H1231.8"/>
</g>
<!-- weekly calendar -->
<g stroke="#abb2ba" stroke-width="2">
 <rect x="1097.4" y="474" width="25" height="24.4" rx="4.2"/>
 <path d="M1097.4,480.4 H1122.4 M1103.7,470.8 V474 M1116.1,470.8 V474"/>
 <path d="M1103.6,486.8 H1107.6 M1112.2,486.8 H1116.2 M1103.6,491.8 H1107.6 M1112.2,491.8 H1116.2"/>
</g>
<!-- x clear -->
<g stroke="#555" stroke-width="2.2" stroke-linecap="butt"><path d="M761.4,174.8 L779,192.2 M779,174.8 L761.4,192.2"/></g>

<!-- card icons -->
<g stroke="#474d55" stroke-width="2.5">
 <circle cx="198.3" cy="295.8" r="4.1"/>
 <circle cx="187.8" cy="299.9" r="2.7"/>
 <circle cx="209" cy="299.9" r="2.7"/>
 <path d="M192.6,313 V309.6 A5.8,6.2 0 0 1 204.2,309.6 V313"/>
 <path d="M183.6,313 V311.2 A4.4,4.6 0 0 1 192,307.6"/>
 <path d="M213,313 V311.2 A4.4,4.6 0 0 0 204.8,307.6"/>
 <path d="M183.6,313 H213"/>
</g>
<g stroke="#474d55" stroke-width="2.4" stroke-linecap="butt" stroke-linejoin="miter">
 <path d="M584,315.6 V291.4 L598.6,288.6 Q602,288.4 602,292 V315.6 Z"/>
 <path d="M602,292.8 H612.6 V315.6 H602"/>
 <path d="M607.3,286.6 V292.8"/>
 <path d="M590.4,310.6 H596 V315.6 H590.4 Z"/>
 <path d="M588,295.5 H591.8 M594.2,295.5 H598 M588,300.5 H591.8 M594.2,300.5 H598 M588,305.7 H591.8 M594.2,305.7 H598"/>
 <path d="M607.4,299.4 H612.6 M607.4,304.5 H612.6 M607.4,309.7 H612.6"/>
</g>
<g stroke="#474d55" stroke-width="2.5">
 <path d="M1000.7,288.4 V299.6 H1010.4 L1000.7,315.6 V306.6 H989.8 Z"/>
</g>
<g stroke="#474d55">
 <path d="M1386.6,288.8 V316.2 H1414.2" stroke-width="2.6"/>
 <path d="M1390.6,312.4 C1393.4,296 1397,289 1402.3,289 C1407.6,289 1411.4,296 1414.2,312.4" stroke-width="1.8"/>
 <path d="M1390.4,302.7 H1396.4 M1401.4,302.7 H1407.4 M1412.2,302.7 H1414.6" stroke-width="1.8"/>
</g>
<!-- toggle icons -->
<g stroke="#e45e7e" stroke-width="2.4">
 <path d="M1868.6,472.4 V496.2 H1896.6"/>
 <path d="M1873.8,487.6 L1879.2,482.8 L1884.4,487.6 L1896.2,476.6"/>
</g>
<g stroke="#a9b0b8" stroke-width="2.4">
 <path d="M1922.4,472.4 V496.2 H1950.2"/>
 <rect x="1927" y="474.6" width="5.4" height="16.6" rx="1"/>
 <rect x="1938.2" y="480" width="5.4" height="11.2" rx="1"/>
</g>
<!-- pencil -->
<g stroke="#474d55" stroke-width="1.9">
 <path d="M1661.6,1165.8 L1662.8,1159.2 L1679.6,1142.4 Q1682,1140.2 1684.6,1142.6 Q1686.8,1145 1684.4,1147.4 L1667.8,1164.2 Z"/>
 <path d="M1677.2,1145 L1682,1149.8"/>
</g>
</svg>
<svg class="abs" style="left:0;top:0" width="2048" height="1453" viewBox="0 0 2048 1453">
<path d="M422.8,369.2 V354.2 M416.1,361.4 L422.8,354.2 L429.5,361.4" stroke="#4dbd78" stroke-width="2.9" fill="none" stroke-linecap="round" stroke-linejoin="round"/>
<path d="M1214.8,369.2 V354.2 M1207.4,361.4 L1214.8,354.2 L1222.2,361.4" stroke="#4dbd78" stroke-width="2.9" fill="none" stroke-linecap="round" stroke-linejoin="round"/>
<path d="M1648.2,369.2 V354.2 M1641.9,361.4 L1648.2,354.2 L1654.4,361.4" stroke="#4dbd78" stroke-width="2.9" fill="none" stroke-linecap="round" stroke-linejoin="round"/>
<path d="M858.5,361.6 H873.6" stroke="#a5abb3" stroke-width="2.4" stroke-linecap="round"/>
<circle cx="207" cy="544.8" r="7" fill="#4da1f5"/>
<circle cx="460.2" cy="544.8" r="7" fill="#4549b3"/>
<circle cx="636.9" cy="544.8" r="7" fill="#dab43f"/>
<path d="M875,1028 H897" stroke="#474e56" stroke-width="5"/>
<path d="M1098.2,1028 H1103.4 M1113.6,1028 H1119.6" stroke="#a9b0b8" stroke-width="5" stroke-linecap="round"/>
<!-- caret -->
<path d="M548,1146.6 L562.8,1146.6 L555.4,1154.6 Z" fill="#474e56"/>
<!-- event chart -->
<line x1="262" y1="1223.8" x2="1947" y2="1223.8" stroke="#e3e3e3" stroke-width="1.5"/>
<line x1="1256.5" y1="1230" x2="1256.5" y2="1453" stroke="#bdbdbd" stroke-width="1.3" stroke-dasharray="4,3"/>
<circle cx="338.5" cy="1223.8" r="8.2" fill="#5ea5d1"/>
<circle cx="491.7" cy="1223.8" r="8.2" fill="#8bc553"/><circle cx="491.7" cy="1223.8" r="2" fill="#7ab845"/>
<circle cx="1257.4" cy="1223.8" r="11.2" fill="#e08de9"/><circle cx="1257.4" cy="1223.8" r="2.2" fill="#c86fd6"/>
<circle cx="1411" cy="1223.8" r="8.2" fill="#c13c33"/><circle cx="1411" cy="1223.8" r="2" fill="#a52a24"/>
<circle cx="1564" cy="1223.8" r="8.2" fill="#e2b66f"/><circle cx="1564" cy="1223.8" r="2" fill="#d2a45c"/>
<circle cx="1717.5" cy="1223.8" r="8.2" fill="#d6396b"/><circle cx="1717.5" cy="1223.8" r="2" fill="#bf2a58"/>
<circle cx="1870.5" cy="1223.8" r="8.2" fill="#6b4c9c"/><circle cx="1870.5" cy="1223.8" r="2" fill="#553a85"/>
</svg>
<div class="abs" style="left:581.3px;top:1185.3px;width:660.5px;height:91.2px;border-radius:5px;background:#212227;box-shadow:0 2px 6px rgba(0,0,0,0.15)"></div>
<svg class="abs" style="left:0;top:0" width="2048" height="1453"><circle cx="608.8" cy="1255.7" r="5.6" fill="#b24fca"/></svg>

<div class="t xl" style="left:121.0px;top:841px;">Mar 27, 2023</div><div class="t xl" style="left:249.4px;top:841px;">Apr 10, 2023</div><div class="t xl" style="left:377.8px;top:841px;">Apr 24, 2023</div><div class="t xl" style="left:506.2px;top:841px;">May 08, 2023</div><div class="t xl" style="left:634.6px;top:841px;">May 22, 2023</div><div class="t xl" style="left:763.0px;top:841px;">Jun 05, 2023</div><div class="t xl" style="left:891.4px;top:841px;">Jun 19, 2023</div><div class="t xl" style="left:1019.8px;top:841px;">Jul 03, 2023</div><div class="t xl" style="left:1148.2px;top:841px;">Jul 17, 2023</div><div class="t xl" style="left:1276.6px;top:841px;">Jul 31, 2023</div><div class="t xl" style="left:1405.0px;top:841px;">Aug 14, 2023</div><div class="t xl" style="left:1533.4px;top:841px;">Aug 28, 2023</div><div class="t xl" style="left:1661.8px;top:841px;">Sep 11, 2023</div>
<div class="t" style="left:160.3px;top:31.0px;font-size:29px;font-weight:bold;color:#222;letter-spacing:-0.375px;">Features &amp; Events</div>
<div class="t" style="left:1856.9px;top:35.4px;font-size:20.5px;font-weight:normal;color:#fff;letter-spacing:-0.2px;-webkit-text-stroke:0.7px #fff;">Create Event</div>
<div class="t" style="left:28.3px;top:169.0px;font-size:17.5px;font-weight:normal;color:#e0e0e0;letter-spacing:-0.08px;-webkit-text-stroke:0.65px #e0e0e0;">People</div>
<div class="t" style="left:23.9px;top:266.0px;font-size:17.5px;font-weight:normal;color:#e0e0e0;letter-spacing:0.334px;-webkit-text-stroke:0.65px #e0e0e0;">Product</div>
<div class="t" style="left:21.0px;top:362.0px;font-size:17.5px;font-weight:normal;color:#e0e0e0;letter-spacing:0.074px;-webkit-text-stroke:0.65px #e0e0e0;">Analytics</div>
<div class="t" style="left:5.6px;top:459.2px;font-size:17.5px;font-weight:normal;color:#e0e0e0;letter-spacing:0.044px;-webkit-text-stroke:0.65px #e0e0e0;">Engagement</div>
<div class="t" style="left:17.6px;top:555.3px;font-size:17.5px;font-weight:normal;color:#e0e0e0;letter-spacing:-0.143px;-webkit-text-stroke:0.65px #e0e0e0;">Feedback</div>
<div class="t" style="left:11.5px;top:1305.8px;font-size:17.5px;font-weight:normal;color:#e0e0e0;letter-spacing:0.533px;-webkit-text-stroke:0.65px #e0e0e0;">Production</div>
<div class="t" style="left:21.6px;top:1402.8px;font-size:17.5px;font-weight:normal;color:#e0e0e0;letter-spacing:-0.142px;-webkit-text-stroke:0.65px #e0e0e0;">Get Help</div>
<div class="t" style="left:70.3px;top:317.6px;font-size:14px;font-weight:normal;color:#fff;letter-spacing:0.267px;-webkit-text-stroke:0.3px #fff;">Beta</div>
<div class="t" style="left:160.6px;top:128.7px;font-size:19.2px;font-weight:normal;color:#474e56;letter-spacing:0.4px;-webkit-text-stroke:0.6px #474e56;">Source</div>
<div class="t" style="left:505.8px;top:128.7px;font-size:19.2px;font-weight:normal;color:#474e56;letter-spacing:0.633px;-webkit-text-stroke:0.6px #474e56;">Segment</div>
<div class="t" style="left:850.8px;top:128.7px;font-size:19.2px;font-weight:normal;color:#474e56;letter-spacing:0.833px;-webkit-text-stroke:0.6px #474e56;">Company</div>
<div class="t" style="left:1195.8px;top:128.7px;font-size:19.2px;font-weight:normal;color:#474e56;letter-spacing:0.72px;-webkit-text-stroke:0.6px #474e56;">Time Period</div>
<div class="t" style="left:226.6px;top:172.5px;font-size:20.5px;font-weight:normal;color:#2b2d30;letter-spacing:-0.62px;-webkit-text-stroke:0.15px #2b2d30;">All Sources</div>
<div class="t" style="left:563.1px;top:171.8px;font-size:20.5px;font-weight:normal;color:#2b2d30;letter-spacing:-0.68px;-webkit-text-stroke:0.15px #2b2d30;">Active</div>
<div class="t" style="left:908.0px;top:171.8px;font-size:20.5px;font-weight:normal;color:#2b2d30;letter-spacing:-0.417px;-webkit-text-stroke:0.15px #2b2d30;">All Companies</div>
<div class="t" style="left:1252.9px;top:171.8px;font-size:20.5px;font-weight:normal;color:#2b2d30;letter-spacing:-0.584px;-webkit-text-stroke:0.15px #2b2d30;">Last 180 days</div>
<div class="t" style="left:226.7px;top:291.0px;font-size:20.5px;font-weight:normal;color:#474e56;letter-spacing:-0.128px;-webkit-text-stroke:0.6px #474e56;">Active Users</div>
<div class="t" style="left:627.1px;top:291.0px;font-size:20.5px;font-weight:normal;color:#474e56;letter-spacing:-0.014px;-webkit-text-stroke:0.6px #474e56;">Active Companies</div>
<div class="t" style="left:1027.5px;top:291.0px;font-size:20.5px;font-weight:normal;color:#474e56;letter-spacing:0.14px;-webkit-text-stroke:0.6px #474e56;">Total Events Occurred</div>
<div class="t" style="left:1428.2px;top:291.0px;font-size:20.5px;font-weight:normal;color:#474e56;letter-spacing:-0.208px;-webkit-text-stroke:0.6px #474e56;">Avg. Occurrences Per User</div>
<div class="t" style="left:182.9px;top:346.9px;font-size:28px;font-weight:normal;color:#474e56;letter-spacing:-0.3px;-webkit-text-stroke:0.9px #474e56;">1,374</div>
<div class="t" style="left:583.0px;top:346.9px;font-size:28px;font-weight:normal;color:#474e56;letter-spacing:0.0px;-webkit-text-stroke:0.9px #474e56;">3</div>
<div class="t" style="left:982.4px;top:346.9px;font-size:28px;font-weight:normal;color:#474e56;letter-spacing:0.25px;-webkit-text-stroke:0.9px #474e56;">6,725</div>
<div class="t" style="left:1384.7px;top:346.9px;font-size:28px;font-weight:normal;color:#474e56;letter-spacing:0.0px;-webkit-text-stroke:0.9px #474e56;">5</div>
<div class="t" style="left:438.5px;top:352.0px;font-size:17.5px;font-weight:normal;color:#4dbd78;letter-spacing:-0.433px;-webkit-text-stroke:0.6px #4dbd78;">177.58%</div>
<div class="t" style="left:882.2px;top:352.0px;font-size:17.5px;font-weight:normal;color:#a5abb3;letter-spacing:-2.0px;-webkit-text-stroke:0.6px #a5abb3;">0%</div>
<div class="t" style="left:1230.4px;top:352.0px;font-size:17.5px;font-weight:normal;color:#4dbd78;letter-spacing:-0.429px;-webkit-text-stroke:0.6px #4dbd78;">1832.47%</div>
<div class="t" style="left:1663.7px;top:352.0px;font-size:17.5px;font-weight:normal;color:#4dbd78;letter-spacing:-0.8px;-webkit-text-stroke:0.6px #4dbd78;">150%</div>
<div class="t" style="left:193.0px;top:469.0px;font-size:29px;font-weight:normal;color:#474e56;letter-spacing:0.486px;-webkit-text-stroke:0.9px #474e56;">Overview</div>
<div class="t" style="left:1141.5px;top:473.7px;font-size:20.5px;font-weight:normal;color:#2b2d30;letter-spacing:-0.72px;-webkit-text-stroke:0.15px #2b2d30;">Weekly</div>
<div class="t" style="left:1412.3px;top:473.7px;font-size:20.5px;font-weight:normal;color:#50565e;letter-spacing:-0.114px;-webkit-text-stroke:0.2px #50565e;">Category</div>
<div class="t" style="left:1524.6px;top:473.0px;font-size:20.5px;font-weight:normal;color:#2b2d30;letter-spacing:-0.415px;-webkit-text-stroke:0.15px #2b2d30;">All Categories</div>
<div class="t" style="left:225.0px;top:532.7px;font-size:20.5px;font-weight:normal;color:#a9b0b8;letter-spacing:-0.23px;-webkit-text-stroke:0.1px #a9b0b8;">Total Events Occurred</div>
<div class="t" style="left:477.6px;top:532.7px;font-size:20.5px;font-weight:normal;color:#a9b0b8;letter-spacing:-0.254px;-webkit-text-stroke:0.1px #a9b0b8;">Unique Users</div>
<div class="t" style="left:654.0px;top:532.7px;font-size:20.5px;font-weight:normal;color:#a9b0b8;letter-spacing:-0.24px;-webkit-text-stroke:0.1px #a9b0b8;">Unique Companies</div>
<div class="t" style="left:236.2px;top:592.6px;font-size:16px;font-weight:normal;color:#9a9a9a;letter-spacing:0.35px;">1,000</div>
<div class="t" style="left:269.3px;top:826.2px;font-size:16px;font-weight:normal;color:#9a9a9a;letter-spacing:0.0px;">0</div>
<div class="t" style="left:909.9px;top:1016.5px;font-size:20.5px;font-weight:normal;color:#474e56;letter-spacing:-0.317px;-webkit-text-stroke:0.6px #474e56;">Last 180 days</div>
<div class="t" style="left:1132.5px;top:1016.5px;font-size:20.5px;font-weight:normal;color:#a9b0b8;letter-spacing:0.115px;-webkit-text-stroke:0.6px #a9b0b8;">Previous Period</div>
<div class="t" style="left:192.5px;top:1134.6px;font-size:29.5px;font-weight:normal;color:#232323;letter-spacing:-0.148px;-webkit-text-stroke:0.5px #232323;">Event Occurrence by User</div>
<div class="t" style="left:239.0px;top:1217.0px;font-size:16px;font-weight:normal;color:#9a9a9a;letter-spacing:0.0px;">1</div>
<div class="t" style="left:1736.1px;top:1144.5px;font-size:20.5px;font-weight:normal;color:#2b2d30;letter-spacing:-0.033px;-webkit-text-stroke:0.15px #2b2d30;">Most Occurred</div>
<div class="t" style="left:663.0px;top:1199.7px;font-size:19.2px;font-weight:normal;color:#fff;letter-spacing:-0.4px;-webkit-text-stroke:0.6px #fff;">Event</div>
<div class="t" style="left:827.7px;top:1199.7px;font-size:19.2px;font-weight:normal;color:#fff;letter-spacing:-0.036px;-webkit-text-stroke:0.6px #fff;">Unique Users</div>
<div class="t" style="left:999.9px;top:1199.7px;font-size:19.2px;font-weight:normal;color:#fff;letter-spacing:-0.235px;-webkit-text-stroke:0.6px #fff;">Avg. Occurrence Per User</div>
<div class="t" style="left:640.8px;top:1245.8px;font-size:19.2px;font-weight:normal;color:#fff;letter-spacing:-0.257px;-webkit-text-stroke:0.15px #fff;">Created Invoice</div>
<div class="t" style="left:869.7px;top:1245.8px;font-size:19.2px;font-weight:normal;color:#fff;letter-spacing:-0.4px;-webkit-text-stroke:0.15px #fff;">503</div>
<div class="t" style="left:1103.9px;top:1245.8px;font-size:19.2px;font-weight:normal;color:#fff;letter-spacing:0.0px;-webkit-text-stroke:0.15px #fff;">1</div>
<div class="t" style="left:204.1px;top:736.3px;font-size:20.8px;font-weight:normal;color:#9b9ea2;letter-spacing:-0.4px;-webkit-text-stroke:0.1px #9b9ea2;transform-origin:0 0;transform:rotate(-90deg);">Count</div>
<div class="t" style="left:206.9px;top:1517.8px;font-size:20.5px;font-weight:normal;color:#9b9ea2;letter-spacing:0.0px;-webkit-text-stroke:0.1px #9b9ea2;transform-origin:0 0;transform:rotate(-90deg);">Avg. Occurrence Per User</div>
</body></html>
